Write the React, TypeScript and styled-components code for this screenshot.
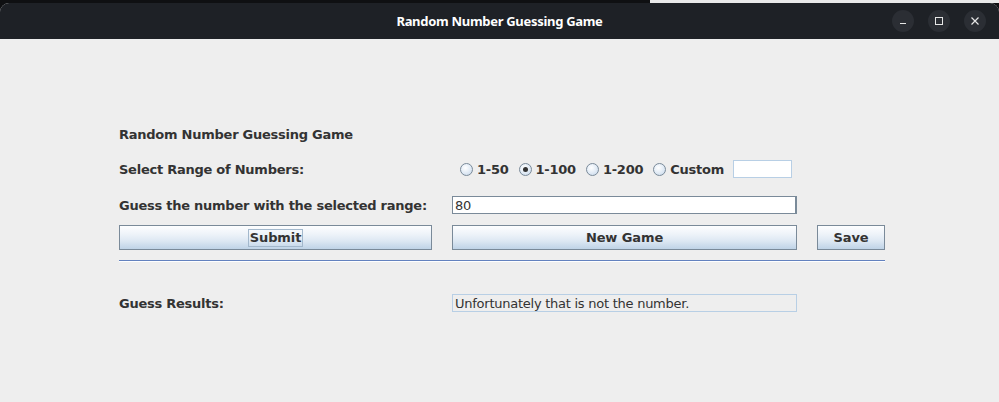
import React, { useState } from 'react';
import styled, { createGlobalStyle } from 'styled-components';

const GlobalStyle = createGlobalStyle`
  html, body {
    margin: 0;
    padding: 0;
    background: #0f1012;
  }
  body {
    font-family: "DejaVu Sans", sans-serif;
  }
`;

const Screen = styled.div`
  width: 999px;
  height: 402px;
  display: flex;
  flex-direction: column;
  overflow: hidden;
`;

const Desktop = styled.div`
  height: 3px;
  display: flex;
  flex-shrink: 0;
`;

const DesktopPart = styled.div<{ $light?: boolean }>`
  flex: ${p => (p.$light ? '0 0 349px' : '1')};
  background: ${p => (p.$light ? '#e9e9e9' : '#0f1012')};
`;

const Window = styled.div`
  flex: 1;
  display: flex;
  flex-direction: column;
  border-radius: 9px 9px 0 0;
  overflow: hidden;
  background: #eeeeee;
`;

const TitleBar = styled.div`
  height: 36px;
  flex-shrink: 0;
  background: #1e2126;
  display: grid;
  grid-template-columns: 1fr auto 1fr;
  align-items: center;
`;

const TitleText = styled.div`
  grid-column: 2;
  color: #ffffff;
  font-family: "Noto Sans", sans-serif;
  font-weight: 700;
  font-size: 13px;
  letter-spacing: -0.3px;
`;

const WindowControls = styled.div`
  grid-column: 3;
  justify-self: end;
  display: flex;
  gap: 14px;
  padding-right: 13px;
`;

const ControlButton = styled.div`
  width: 22px;
  height: 22px;
  border-radius: 50%;
  background: #2b2e34;
  display: flex;
  align-items: center;
  justify-content: center;
  color: #e6e6e6;
`;

const Content = styled.div`
  flex: 1;
  padding: 83px 0 0 119px;
`;

const Row = styled.div<{ $top: number; $h: number }>`
  margin-top: ${p => p.$top}px;
  height: ${p => p.$h}px;
  display: grid;
  grid-template-columns: 313px 345px 68px;
  column-gap: 20px;
  align-items: center;
`;

const Label = styled.div`
  font-weight: 700;
  font-size: 13px;
  letter-spacing: -0.25px;
  color: #333333;
  white-space: nowrap;
`;

const RadioGroup = styled.div`
  display: flex;
  align-items: center;
  justify-content: center;
  gap: 10px;
  white-space: nowrap;
  margin-right: -3px;
`;

const RadioItem = styled.label`
  display: flex;
  align-items: center;
  gap: 4px;
  font-weight: 700;
  font-size: 13px;
  letter-spacing: -0.25px;
  color: #333333;
`;

const RadioDot = styled.span<{ $on?: boolean }>`
  width: 11px;
  height: 11px;
  border-radius: 50%;
  border: 1px solid #7a8a99;
  background: radial-gradient(circle at 40% 35%, #ffffff 0%, #e6eef7 45%, #c4d6e9 100%);
  display: flex;
  align-items: center;
  justify-content: center;
  &::after {
    content: '';
    width: 5px;
    height: 5px;
    border-radius: 50%;
    background: #333333;
    display: ${p => (p.$on ? 'block' : 'none')};
  }
`;

const SmallField = styled.input`
  box-sizing: border-box;
  width: 59px;
  height: 18px;
  border: 1px solid #b8cfe5;
  background: #ffffff;
  padding: 0;
  margin-left: -1px;
`;

const TextField = styled.input<{ $readOnly?: boolean }>`
  box-sizing: border-box;
  width: 345px;
  height: 18px;
  padding: 0 2px;
  border: 1px solid ${p => (p.$readOnly ? '#b8cfe5' : '#7a8a99')};
  border-right-width: ${p => (p.$readOnly ? 1 : 2)}px;
  background: ${p => (p.$readOnly ? '#eeeeee' : '#ffffff')};
  font-family: "DejaVu Sans", sans-serif;
  font-size: 13px;
  letter-spacing: -0.25px;
  color: #333333;
  outline: none;
`;

const Button = styled.button<{ $focus?: boolean }>`
  box-sizing: border-box;
  height: 25px;
  width: 100%;
  border: 1px solid #7a8a99;
  background: linear-gradient(to bottom, #fdfeff 0%, #eef3f9 35%, #dde8f3 65%, #bfd3e7 100%);
  font-family: "DejaVu Sans", sans-serif;
  font-weight: 700;
  font-size: 13px;
  letter-spacing: -0.1px;
  color: #333333;
  padding: 0;
  display: flex;
  align-items: center;
  justify-content: center;
  span {
    padding: 0 1px 1px;
    border: 1px solid ${p => (p.$focus ? '#a3b8cc' : 'transparent')};
  }
`;

const Separator = styled.div`
  margin-top: 10px;
  width: 766px;
  height: 1px;
  background: #6382bf;
  border-bottom: 1px solid #ffffff;
`;

export default function App() {
  const [range, setRange] = useState('1-100');
  const [guess, setGuess] = useState('80');
  const ranges = ['1-50', '1-100', '1-200', 'Custom'];

  return (
    <Screen>
      <GlobalStyle />
      <Desktop>
        <DesktopPart />
        <DesktopPart $light />
      </Desktop>
      <Window>
        <TitleBar>
          <TitleText>Random Number Guessing Game</TitleText>
          <WindowControls>
            <ControlButton>
              <svg width="10" height="10" viewBox="0 0 10 10">
                <path d="M2 7.5h6" stroke="currentColor" strokeWidth="1" />
              </svg>
            </ControlButton>
            <ControlButton>
              <svg width="10" height="10" viewBox="0 0 10 10">
                <rect x="1.5" y="1.5" width="7" height="7" fill="none" stroke="currentColor" strokeWidth="1" />
              </svg>
            </ControlButton>
            <ControlButton>
              <svg width="10" height="10" viewBox="0 0 10 10">
                <path d="M1.5 1.5l7 7M8.5 1.5l-7 7" stroke="currentColor" strokeWidth="1.2" />
              </svg>
            </ControlButton>
          </WindowControls>
        </TitleBar>
        <Content>
          <Row $top={0} $h={24}>
            <Label>Random Number Guessing Game</Label>
          </Row>
          <Row $top={11} $h={24}>
            <Label>Select Range of Numbers:</Label>
            <RadioGroup>
              {ranges.map(r => (
                <RadioItem key={r} onClick={() => setRange(r)}>
                  <RadioDot $on={range === r} />
                  {r}
                </RadioItem>
              ))}
              <SmallField />
            </RadioGroup>
          </Row>
          <Row $top={14} $h={20}>
            <Label>Guess the number with the selected range:</Label>
            <TextField value={guess} onChange={e => setGuess(e.target.value)} />
          </Row>
          <Row $top={10} $h={25}>
            <Button $focus>
              <span>Submit</span>
            </Button>
            <Button>
              <span>New Game</span>
            </Button>
            <Button>
              <span>Save</span>
            </Button>
          </Row>
          <Separator />
          <Row $top={31} $h={20}>
            <Label>Guess Results:</Label>
            <TextField $readOnly readOnly value="Unfortunately that is not the number." />
          </Row>
        </Content>
      </Window>
    </Screen>
  );
}
